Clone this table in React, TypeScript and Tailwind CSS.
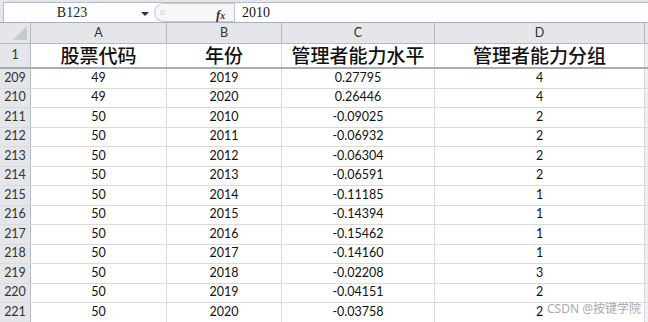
import React from 'react';

const rows = [
  ['209', '49', '2019', '0.27795', '4'],
  ['210', '49', '2020', '0.26446', '4'],
  ['211', '50', '2010', '-0.09025', '2'],
  ['212', '50', '2011', '-0.06932', '2'],
  ['213', '50', '2012', '-0.06304', '2'],
  ['214', '50', '2013', '-0.06591', '2'],
  ['215', '50', '2014', '-0.11185', '1'],
  ['216', '50', '2015', '-0.14394', '1'],
  ['217', '50', '2016', '-0.15462', '1'],
  ['218', '50', '2017', '-0.14160', '1'],
  ['219', '50', '2018', '-0.02208', '3'],
  ['220', '50', '2019', '-0.04151', '2'],
  ['221', '50', '2020', '-0.03758', '2'],
];

const widths = ['w-[136px]', 'w-[115px]', 'w-[153px]', 'w-[210px]'];

export default function App() {
  return (
    <div className="relative w-[648px] h-[322px] overflow-hidden bg-white text-[#111]" style={{ fontFamily: 'Lato, "Noto Sans CJK SC", sans-serif' }}>
      {/* formula bar */}
      <div className="h-[23px] pt-[2px] pl-[3px] bg-[#e3e6ea] border-b border-[#a9b0ba]">
        <div className="flex h-[20px] bg-white border-l border-t border-[#b6bcc5]">
          <div className="relative w-[150px] flex items-center justify-center text-[14px] text-[#222]" style={{ fontFamily: '"Liberation Serif", serif' }}>
            <span className="mr-[14px]">B123</span>
            <span className="absolute left-[137px] top-[9px] w-0 h-0 border-l-[4px] border-r-[4px] border-t-[4px] border-l-transparent border-r-transparent border-t-[#333]"></span>
          </div>
          <div className="relative w-[80px] flex items-center rounded-l-full border-l border-t border-b border-[#c8ccd2] bg-[#f7f7f7]">
            <span className="ml-[5px] w-[5px] h-[5px] rounded-full border border-[#d0d0d0]"></span>
            <span className="absolute left-[61px] top-[1px] text-[13px] italic font-bold text-[#333]" style={{ fontFamily: '"Liberation Serif", serif' }}>f<span className="text-[10px]">x</span></span>
          </div>
          <div className="flex-1 flex items-center pl-[7px] border-l border-[#c0c4ca] text-[14px]" style={{ fontFamily: '"Liberation Serif", serif' }}>
            2010
          </div>
        </div>
      </div>

      {/* column headers */}
      <div className="flex h-[21px] bg-[#e4e6ea] border-b border-[#b4bac3] text-[12.5px] text-[#333]">
        <div className="relative w-[31px] border-r border-[#b4bac3]">
          <div className="absolute right-[3px] bottom-[3px] w-0 h-0 border-l-[14px] border-l-transparent border-b-[14px] border-b-[#c6cad0]"></div>
        </div>
        {['A', 'B', 'C', 'D'].map((c, i) => (
          <div key={c} className={`${widths[i]} flex items-center justify-center border-r border-[#b4bac3]`}>{c}</div>
        ))}
        <div className="flex-1"></div>
      </div>

      {/* row 1 */}
      <div className="flex h-[25px] border-b-2 border-[#a7adb6] text-[19px]">
        <div className="w-[31px] flex items-center justify-center bg-[#e4e6ea] border-r border-[#b4bac3] text-[12.5px] text-[#333]">1</div>
        {['股票代码', '年份', '管理者能力水平', '管理者能力分组'].map((t, i) => (
          <div key={t} className={`${widths[i]} flex items-center justify-center border-r border-[#d9d9d9] font-medium text-[#111]`} style={{ fontFamily: '"Noto Sans CJK SC", sans-serif' }}>{t}</div>
        ))}
        <div className="flex-1 bg-[#eef0f3]"></div>
      </div>

      {/* data rows */}
      {rows.map((r) => (
        <div key={r[0]} className="flex h-[19.5px] border-b border-[#dadada] text-[12.5px]">
          <div className="w-[31px] flex items-center justify-center bg-[#e4e6ea] border-r border-[#b4bac3] text-[#333]">{r[0]}</div>
          {r.slice(1).map((v, i) => (
            <div key={i} className={`${widths[i]} flex items-center justify-center border-r border-[#dadada]`}>{v}</div>
          ))}
          <div className="flex-1 bg-[#eef0f3]"></div>
        </div>
      ))}

      <div className="absolute right-[7px] bottom-[4px] text-[12px] text-[#aaaaaa]" style={{ fontFamily: '"Noto Sans", "Noto Sans CJK SC", sans-serif' }}>
        CSDN @按键学院
      </div>
    </div>
  );
}
